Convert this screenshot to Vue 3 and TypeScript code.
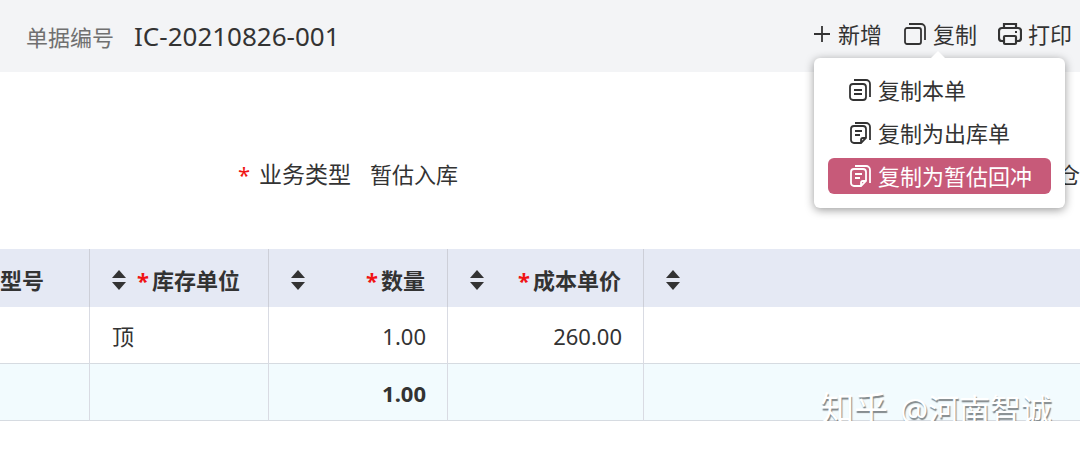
<script setup lang="ts">
import { ref } from 'vue'

type IconName = 'lines' | 'fold'

interface MenuEntry {
  label: string
  icon: IconName
}

interface Column {
  key: string
  label: string
  required: boolean
  numeric: boolean
  sortable: boolean
}

const menu: MenuEntry[] = [
  { label: '复制本单', icon: 'lines' },
  { label: '复制为出库单', icon: 'fold' },
  { label: '复制为暂估回冲', icon: 'fold' },
]
const selected = ref(2)
const menuOpen = ref(true)
const businessType = ref('暂估入库')

const columns: Column[] = [
  { key: 'model', label: '型号', required: false, numeric: false, sortable: false },
  { key: 'unit', label: '库存单位', required: true, numeric: false, sortable: true },
  { key: 'qty', label: '数量', required: true, numeric: true, sortable: true },
  { key: 'cost', label: '成本单价', required: true, numeric: true, sortable: true },
  { key: 'rest', label: '', required: false, numeric: false, sortable: true },
]
const rows: Record<string, string>[] = [{ unit: '顶', qty: '1.00', cost: '260.00' }]
const totals: Record<string, string> = { qty: '1.00' }
</script>

<template>
  <div class="page">
    <header class="topbar">
      <div class="doc">
        <span class="doc-label">单据编号</span>
        <span class="doc-number">IC-20210826-001</span>
      </div>
      <div class="tools">
        <button type="button" class="tool">
          <svg class="tool-icon" viewBox="0 0 24 24"><path d="M14 4v16M6 12h16" /></svg>
          <span>新增</span>
        </button>
        <div class="copy">
          <button type="button" class="tool" :aria-expanded="menuOpen" @click="menuOpen = !menuOpen">
            <svg class="tool-icon" viewBox="0 0 24 24">
              <rect x="2" y="6" width="16" height="16" rx="2" />
              <path d="M6 2h12a4 4 0 0 1 4 4v12" />
            </svg>
            <span>复制</span>
          </button>
          <div v-if="menuOpen" class="menu">
            <button
              v-for="(entry, i) in menu"
              :key="entry.label"
              type="button"
              class="entry"
              :class="{ active: i === selected }"
              @click="selected = i"
            >
              <svg v-if="entry.icon === 'lines'" class="entry-icon" viewBox="0 0 22 22">
                <rect x="1" y="5" width="16" height="16" rx="3" />
                <path d="M5 1h12a4 4 0 0 1 4 4v13M5 11h8M5 15h8" />
              </svg>
              <svg v-else class="entry-icon" viewBox="0 0 22 22">
                <path d="M5 4h9a3 3 0 0 1 3 3v9l-5 5H5a3 3 0 0 1-3-3V7a3 3 0 0 1 3-3zM12 21v-3a2 2 0 0 1 2-2h3M6 1h11a4 4 0 0 1 4 4v13M6 9h7M6 13h5" />
              </svg>
              <span>{{ entry.label }}</span>
            </button>
          </div>
        </div>
        <button type="button" class="tool">
          <svg class="tool-icon heavy" viewBox="0 0 24 24">
            <path d="M6 6V2h12v4M6 19H4a3 3 0 0 1-3-3V9a3 3 0 0 1 3-3h16a3 3 0 0 1 3 3v7a3 3 0 0 1-3 3h-2" />
            <rect x="6" y="14" width="12" height="8" rx="1" />
            <path d="M17 10h2" />
          </svg>
          <span>打印</span>
        </button>
      </div>
    </header>

    <form class="fields" @submit.prevent>
      <div class="field">
        <span class="star">*</span>
        <label for="business-type">业务类型</label>
        <input id="business-type" v-model="businessType" type="text" />
      </div>
      <span class="next-field">仓</span>
    </form>

    <div class="grid">
      <table>
        <colgroup>
          <col v-for="c in columns" :key="c.key" :class="'col-' + c.key" />
        </colgroup>
        <thead>
          <tr>
            <th v-for="c in columns" :key="c.key" scope="col">
              <div class="head" :class="{ numeric: c.numeric }">
                <button v-if="c.sortable" type="button" class="sort" aria-label="排序">
                  <svg viewBox="0 0 14 22"><path d="M7 1l7 8H0zM7 21l7-8H0z" /></svg>
                </button>
                <span class="head-text"><span v-if="c.required" class="star">*</span>{{ c.label }}</span>
              </div>
            </th>
          </tr>
        </thead>
        <tbody>
          <tr v-for="(row, i) in rows" :key="i">
            <td v-for="c in columns" :key="c.key" :class="{ numeric: c.numeric }">{{ row[c.key] }}</td>
          </tr>
        </tbody>
        <tfoot>
          <tr>
            <td v-for="c in columns" :key="c.key" :class="{ numeric: c.numeric }">{{ totals[c.key] }}</td>
          </tr>
        </tfoot>
      </table>
      <div class="watermark"><span class="brand">知乎</span><span>@河南智诚</span></div>
    </div>
  </div>
</template>

<style>
body {
  background: #fff;
}
</style>

<style scoped>
.page {
  font-family: 'Noto Sans', 'Noto Sans CJK SC', sans-serif;
  font-size: 22px;
  line-height: 32px;
  color: #333;
}
.page * {
  box-sizing: border-box;
}
button,
input {
  font: inherit;
  color: inherit;
  background: none;
  border: 0;
  padding: 0;
  margin: 0;
}
button {
  cursor: pointer;
}
svg {
  display: block;
  flex: none;
  fill: none;
  stroke: currentColor;
  stroke-width: 1.8;
}
.topbar {
  display: flex;
  justify-content: space-between;
  align-items: center;
  height: 72px;
  padding: 0 8px 0 26px;
  background: #f3f4f6;
}
.doc {
  display: flex;
  align-items: baseline;
  gap: 20px;
}
.doc-label {
  color: #707070;
}
.doc-number {
  font-size: 26px;
}
.tools {
  display: flex;
  gap: 21px;
  padding-bottom: 4px;
}
.tool {
  display: flex;
  align-items: center;
  gap: 6px;
  white-space: nowrap;
}
.tool-icon {
  width: 24px;
  height: 24px;
}
.heavy {
  stroke-width: 2.2;
}
.copy {
  position: relative;
}
.menu {
  position: absolute;
  z-index: 2;
  top: 40px;
  left: -89px;
  width: 251px;
  display: flex;
  flex-direction: column;
  gap: 7px;
  padding: 14px;
  background: #fff;
  border-radius: 6px;
  box-shadow: 0 2px 10px rgba(0, 0, 0, 0.4);
}
.menu::before {
  content: '';
  position: absolute;
  top: -7px;
  left: 116px;
  border: solid transparent;
  border-width: 0 8px 8px;
  border-bottom-color: #fff;
}
.entry {
  display: flex;
  align-items: center;
  gap: 7px;
  height: 36px;
  padding-left: 21px;
  border-radius: 6px;
  white-space: nowrap;
}
.entry.active {
  background: #c75a79;
  color: #fff;
}
.entry-icon {
  width: 22px;
  height: 22px;
}
.star {
  color: #f01414;
}
.fields {
  display: flex;
  justify-content: space-between;
  padding: 86px 0 59px 238px;
}
.field {
  display: flex;
  align-items: center;
}
.field .star {
  width: 21px;
}
.field label {
  font-size: 23px;
  margin-right: 19px;
}
.field input {
  width: 200px;
  height: 32px;
}
.next-field {
  width: 22px;
  overflow: hidden;
}
.grid {
  position: relative;
}
table {
  width: 100%;
  table-layout: fixed;
  border-collapse: separate;
  border-spacing: 0;
}
.col-model {
  width: 90px;
}
.col-unit,
.col-qty {
  width: 179px;
}
.col-cost {
  width: 196px;
}
th,
td {
  height: 57px;
  padding: 1px 22px 0;
  border-right: 1px solid #d9dbe3;
  text-align: left;
}
th {
  height: 58px;
  padding-top: 3px;
  background: #e5e9f4;
  border-right-color: #cdcfd8;
}
th:first-child {
  padding-left: 0;
}
th:last-child,
td:last-child {
  border-right: 0;
}
td {
  border-bottom: 1px solid #d6dbe1;
}
tfoot td {
  background: #f2fbfe;
  font-weight: 700;
}
td.numeric {
  padding-right: 21px;
  text-align: right;
}
.head {
  display: flex;
  align-items: center;
  gap: 11px;
  white-space: nowrap;
}
.head.numeric {
  justify-content: space-between;
}
.head .star {
  margin-right: 3px;
}
.sort {
  width: 14px;
  height: 22px;
}
.sort svg {
  width: 14px;
  height: 22px;
  fill: #333;
  stroke: none;
}
.watermark {
  position: absolute;
  right: 28px;
  bottom: -8px;
  display: flex;
  align-items: baseline;
  gap: 12px;
  font-size: 31px;
  line-height: 40px;
  color: #fff;
  text-shadow: 1px 2px 1px #81888b;
  pointer-events: none;
}
.brand {
  font-size: 34px;
}
</style>
